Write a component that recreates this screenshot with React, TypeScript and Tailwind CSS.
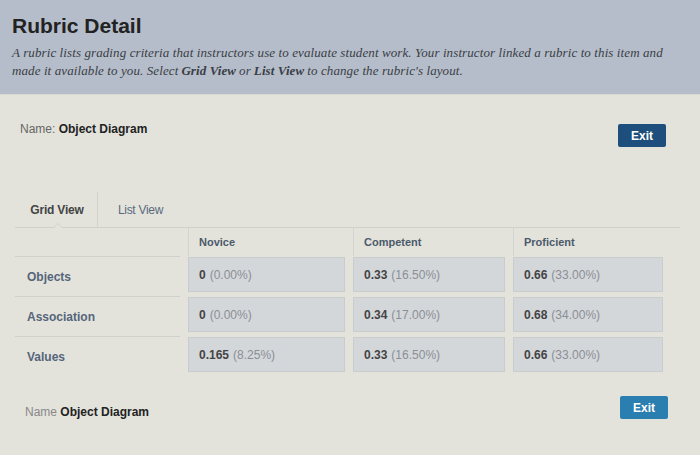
import React from 'react';

interface Level {
  points: string;
  percent: string;
}

interface Criterion {
  name: string;
  levels: Level[];
}

const levels = ['Novice', 'Competent', 'Proficient'];

const criteria: Criterion[] = [
  {
    name: 'Objects',
    levels: [
      { points: '0', percent: '(0.00%)' },
      { points: '0.33', percent: '(16.50%)' },
      { points: '0.66', percent: '(33.00%)' },
    ],
  },
  {
    name: 'Association',
    levels: [
      { points: '0', percent: '(0.00%)' },
      { points: '0.34', percent: '(17.00%)' },
      { points: '0.68', percent: '(34.00%)' },
    ],
  },
  {
    name: 'Values',
    levels: [
      { points: '0.165', percent: '(8.25%)' },
      { points: '0.33', percent: '(16.50%)' },
      { points: '0.66', percent: '(33.00%)' },
    ],
  },
];

export default function App() {
  return (
    <div className="w-[700px] h-[455px] overflow-hidden bg-[#e3e3dc] font-['Liberation_Sans',Arial,sans-serif] text-[#333]">
      {/* Header */}
      <div className="h-[95px] bg-[#b5bdcb] px-3 pt-[13px] border-b border-[#d8dad6]">
        <h1 className="text-[21px] font-bold text-[#222] leading-[26px]">Rubric Detail</h1>
        <div className="mt-[5px] font-['Liberation_Serif',Georgia,serif] italic text-[13px] leading-[18px] tracking-[0.1px] text-[#3a3d44]">
          <div>
            A rubric lists grading criteria that instructors use to evaluate student work. Your instructor linked a rubric to this item and
          </div>
          <div className="flex gap-[3px]">
            <span>made it available to you. Select</span>
            <b>Grid View</b>
            <span>or</span>
            <b>List View</b>
            <span>to change the rubric's layout.</span>
          </div>
        </div>
      </div>

      {/* Name + Exit */}
      <div className="flex items-start justify-between pl-5 pr-[34px] pt-[29px]">
        <div className="text-[12px] -mt-[4px]">
          <span className="text-[#666]">Name: </span>
          <span className="font-bold text-[#222]">Object Diagram</span>
        </div>
        <button className="h-[23px] px-[13px] rounded-[2px] bg-[#1e4f7c] text-white text-[12px] font-bold">
          Exit
        </button>
      </div>

      {/* Tabs */}
      <div className="mt-[45px] ml-[15px] mr-[20px] relative flex border-b border-[#cfd1cc] h-[36px]">
        <div className="w-[82px] flex items-center justify-center pl-[2px] text-[12px] font-bold text-[#444] tracking-[-0.2px]">
          Grid View
        </div>
        <div className="border-l border-[#d2d3ce] w-[66px] flex items-center justify-end text-[12px] text-[#5a6a7e] tracking-[-0.3px]">
          List View
        </div>
        <div className="absolute left-[38px] -bottom-[1px] w-0 h-0 border-l-[5px] border-r-[5px] border-b-[5px] border-l-transparent border-r-transparent border-b-[#cfd1cc]" />
        <div className="absolute left-[39px] -bottom-[1px] w-0 h-0 border-l-[4px] border-r-[4px] border-b-[4px] border-l-transparent border-r-transparent border-b-[#e3e3dc]" />
      </div>

      {/* Grid */}
      <div className="ml-[15px] grid grid-cols-[165px_157px_152px_150px] gap-x-[8px]">
        <div className="h-[28px]" />
        {levels.map((lvl) => (
          <div
            key={lvl}
            className="h-[28px] flex items-end pb-[6px] pl-[10px] text-[11px] font-bold text-[#4b5a6b] border-l border-[#d3d4cf]"
          >
            {lvl}
          </div>
        ))}

        {criteria.map((c) => (
          <React.Fragment key={c.name}>
            <div className="h-[40px] border-t border-[#d0d1cc] flex items-center pl-3 text-[12px] font-bold text-[#55657a]">
              {c.name}
            </div>
            {c.levels.map((l, i) => (
              <div key={i} className="h-[40px] pt-[1px] pb-[4px]">
                <div className="h-full bg-[#d4d7da] border border-[#c9ccce] flex items-center pl-[10px] text-[12px]">
                  <span className="font-bold text-[#444]">{l.points}</span>
                  <span className="ml-[4px] text-[#8a8f96]">{l.percent}</span>
                </div>
              </div>
            ))}
          </React.Fragment>
        ))}
      </div>

      {/* Footer */}
      <div className="mt-[20px] flex items-start justify-between pl-[25px] pr-[32px]">
        <div className="text-[12px] mt-[7px]">
          <span className="text-[#888]">Name </span>
          <span className="font-bold text-[#222]">Object Diagram</span>
        </div>
        <button className="h-[23px] px-[13px] rounded-[2px] bg-[#2a7eb0] text-white text-[12px] font-bold">
          Exit
        </button>
      </div>
    </div>
  );
}
